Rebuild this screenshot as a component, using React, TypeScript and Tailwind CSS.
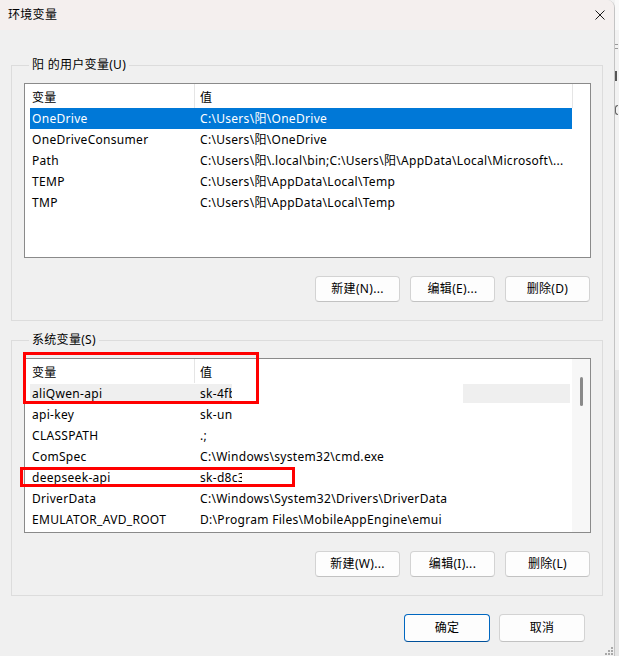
import React from "react";

type Row = { name: string; value: string; clip?: number; hover?: boolean };

const USER_VARS: Row[] = [
  { name: "OneDrive", value: "C:\\Users\\阳\\OneDrive" },
  { name: "OneDriveConsumer", value: "C:\\Users\\阳\\OneDrive" },
  { name: "Path", value: "C:\\Users\\阳\\.local\\bin;C:\\Users\\阳\\AppData\\Local\\Microsoft\\..." },
  { name: "TEMP", value: "C:\\Users\\阳\\AppData\\Local\\Temp" },
  { name: "TMP", value: "C:\\Users\\阳\\AppData\\Local\\Temp" },
];

const SYSTEM_VARS: Row[] = [
  { name: "aliQwen-api", value: "sk-4fb2e9", clip: 32, hover: true },
  { name: "api-key", value: "sk-un83a", clip: 32 },
  { name: "CLASSPATH", value: ".;" },
  { name: "ComSpec", value: "C:\\Windows\\system32\\cmd.exe" },
  { name: "deepseek-api", value: "sk-d8c3f1", clip: 42 },
  { name: "DriverData", value: "C:\\Windows\\System32\\Drivers\\DriverData" },
  { name: "EMULATOR_AVD_ROOT", value: "D:\\Program Files\\MobileAppEngine\\emui" },
];

function Value({ row }: { row: Row }) {
  if (row.clip) {
    return (
      <span className="inline-block overflow-hidden whitespace-nowrap" style={{ width: row.clip }}>
        {row.value}
      </span>
    );
  }
  return <span className="overflow-hidden whitespace-nowrap">{row.value}</span>;
}

function VarRow({ row, selected }: { row: Row; selected?: boolean }) {
  if (row.hover) {
    return (
      <div className="flex h-[21px] py-[1px]">
        <div className="flex w-[165px] items-center bg-[#efefef] pl-[2px] pt-[1px]">{row.name}</div>
        <div className="flex w-[37px] items-center bg-[#efefef] pl-[5px] pt-[1px]">
          <Value row={row} />
        </div>
        <div className="w-[231px]" />
        <div className="mr-[2px] flex-1 bg-[#efefef]" />
      </div>
    );
  }
  return (
    <div
      className={
        selected
          ? "flex h-[21px] items-center bg-[#0078d7] pt-[1px] text-white"
          : "flex h-[21px] items-center pt-[1px]"
      }
    >
      <div className="w-[165px] pl-[2px] whitespace-nowrap">{row.name}</div>
      <div className="flex min-w-0 flex-1 pl-[5px]">
        <Value row={row} />
      </div>
    </div>
  );
}

function VarList({ rows, selectedIndex, scroll }: { rows: Row[]; selectedIndex?: number; scroll?: boolean }) {
  return (
    <div className="flex h-[175px] w-[567px] border border-[#8a8a8a] bg-white">
      <div className="flex w-[547px] flex-col pl-[5px]">
        <div className="flex h-[24px] items-center">
          <div className="w-[164px] pl-[2px] pt-[3px]">变量</div>
          <div className="h-full w-px bg-[#e5e5e5]" />
          <div className="pl-[5px] pt-[3px]">值</div>
        </div>
        {rows.map((r, i) => (
          <VarRow key={r.name} row={r} selected={i === selectedIndex} />
        ))}
      </div>
      {scroll ? (
        <div className="flex flex-1 justify-center bg-[#f7f7f7] pt-[18px]">
          <div className="h-[29px] w-[3px] rounded-full bg-[#8a8a8a]" />
        </div>
      ) : (
        <div className="flex-1">
          <div className="h-[24px] border-l border-[#e5e5e5]" />
        </div>
      )}
    </div>
  );
}

function Btn({ children, primary, w = "w-[85px]", h = "h-[26px]" }: { children: React.ReactNode; primary?: boolean; w?: string; h?: string }) {
  return (
    <div
      className={[
        "flex items-center justify-center rounded-[4px] border",
        w,
        h,
        primary ? "border-[#0067c0] border-b-[#00509a] bg-[#fdfdfd]" : "border-[#d3d3d3] border-b-[#c2c2c2] bg-[#fdfdfd]",
      ].join(" ")}
    >
      {children}
    </div>
  );
}

function Group({ title, children, className }: { title: string; children: React.ReactNode; className?: string }) {
  return (
    <fieldset className={"ml-[11px] w-[592px] border border-[#dcdcdc] pl-[12px] pt-[10px] pb-[18px] " + (className ?? "")}>
      <legend className="ml-[5px] px-[3px] leading-[16px]">{title}</legend>
      {children}
    </fieldset>
  );
}

export default function App() {
  return (
    <div
      className="relative flex h-[656px] w-[619px] overflow-hidden bg-[#f2f2f2] text-[12px] tracking-[0.3px] text-black"
      style={{ fontFamily: '"Noto Sans", "Noto Sans CJK SC", sans-serif' }}
    >
      {/* dialog window */}
      <div className="flex w-[615px] flex-col overflow-hidden rounded-tr-[8px] border-r border-[#c4c4c4] bg-[#f0f0f0]">
        <div className="flex h-[30px] shrink-0 items-center justify-between bg-[#f4efee] pl-[8px] pr-[8px]">
          <span>环境变量</span>
          <svg width="10" height="10" viewBox="0 0 10 10" className="mr-[1px]">
            <path d="M0.5 0.5 L9.5 9.5 M9.5 0.5 L0.5 9.5" stroke="#1a1a1a" strokeWidth="1" fill="none" />
          </svg>
        </div>

        <Group title="阳 的用户变量(U)" className="mt-[27px]">
          <VarList rows={USER_VARS} selectedIndex={0} />
          <div className="mt-[18px] flex w-[567px] justify-end gap-[10px] pr-[1px]">
            <Btn>新建(N)...</Btn>
            <Btn>编辑(E)...</Btn>
            <Btn>删除(D)</Btn>
          </div>
        </Group>

        <Group title="系统变量(S)" className="mt-[11px]">
          <VarList rows={SYSTEM_VARS} scroll />
          <div className="mt-[18px] flex w-[567px] justify-end gap-[10px] pr-[1px]">
            <Btn>新建(W)...</Btn>
            <Btn>编辑(I)...</Btn>
            <Btn>删除(L)</Btn>
          </div>
        </Group>

        <div className="mt-[18px] flex justify-end gap-[9px] pr-[29px]">
          <Btn primary w="w-[86px]" h="h-[28px]">确定</Btn>
          <Btn w="w-[86px]" h="h-[28px]">取消</Btn>
        </div>

        <div className="flex flex-1 items-end justify-end pb-[1px] pr-[1px]">
          <svg width="9" height="9" viewBox="0 0 9 9">
            <g fill="#a8a8a8">
              <rect x="7" y="1" width="2" height="2" />
              <rect x="4" y="4" width="2" height="2" />
              <rect x="7" y="4" width="2" height="2" />
              <rect x="1" y="7" width="2" height="2" />
              <rect x="4" y="7" width="2" height="2" />
              <rect x="7" y="7" width="2" height="2" />
            </g>
          </svg>
        </div>
      </div>

      {/* sliver of the window behind */}
      <div className="flex flex-1 flex-col">
        <div className="h-[30px] bg-[#f9f9f9]" />
        <div className="mt-[14px] h-[1px] w-[3px] bg-[#9a9a9a]" />
        <div className="mt-[3px] h-[1px] w-[3px] bg-[#9a9a9a]" />
        <div className="mt-[22px] h-[10px] w-[2px] bg-[#555]" />
        <div className="mt-[24px] h-[10px] w-[3px] rounded-l-full border-y border-l border-[#666]" />
        <div className="mt-[255px] flex-1 bg-[#e6e6e6]" />
      </div>

      {/* red annotation boxes */}
      <div className="absolute left-[23px] top-[352px] h-[52px] w-[236px] border-[3px] border-[#ff0000]" />
      <div className="absolute left-[20px] top-[467px] h-[20px] w-[275px] border-[3px] border-[#ff0000]" />
    </div>
  );
}
